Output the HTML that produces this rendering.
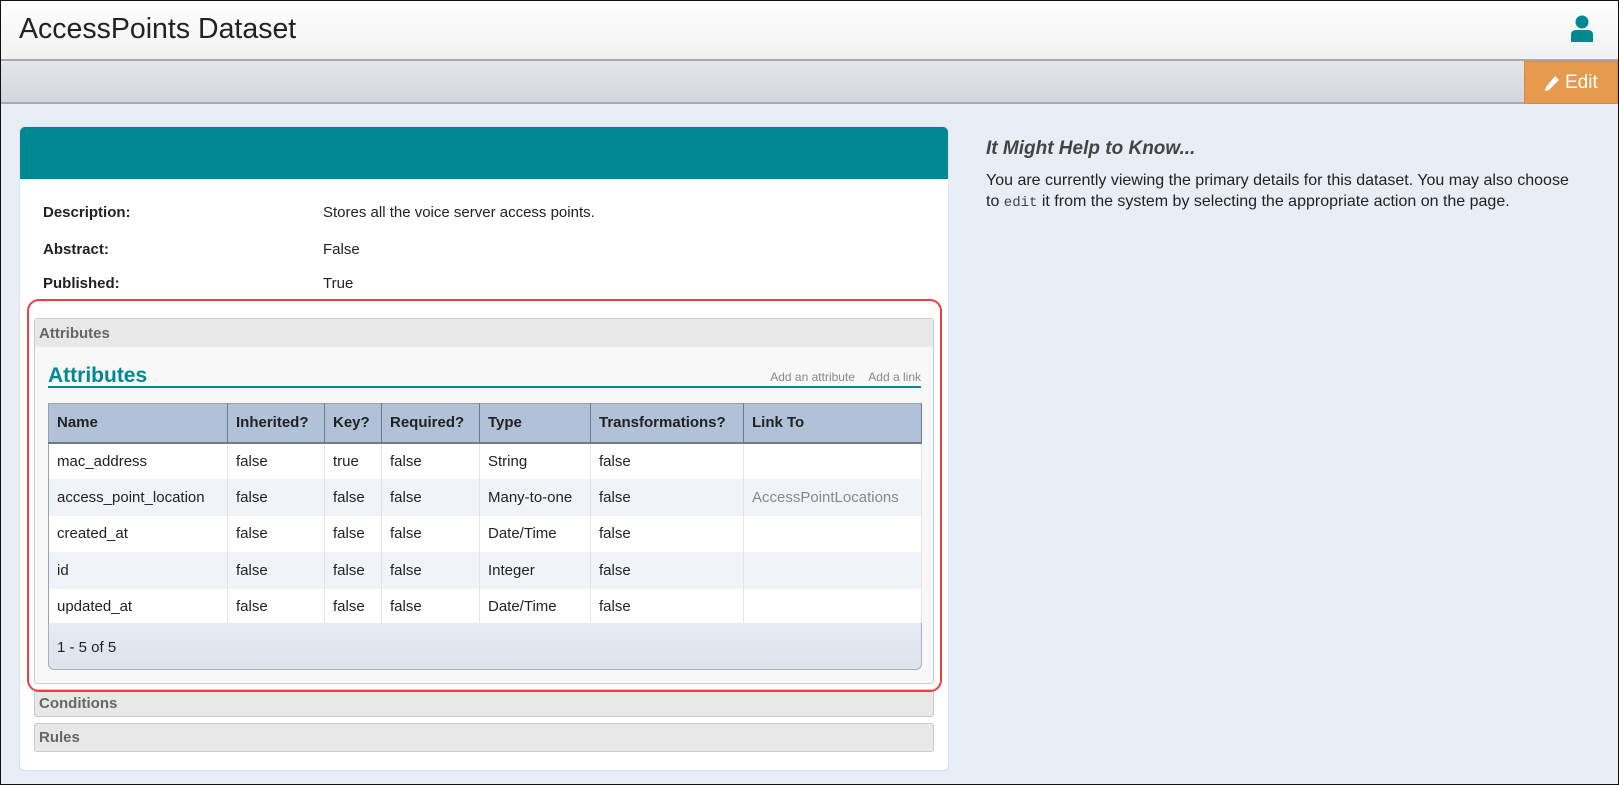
<!DOCTYPE html>
<html><head><meta charset="utf-8"><style>
*{box-sizing:border-box;margin:0;padding:0}
body{width:1619px;height:785px;overflow:hidden;background:#e9edf5;font-family:"Liberation Sans",Arial,sans-serif;color:#222;position:relative}
.frame{position:absolute;left:0;top:0;width:1619px;height:785px;border:1px solid #111;pointer-events:none;z-index:10}
.hdr{position:absolute;left:0;top:0;width:1619px;height:61px;background:linear-gradient(#fff,#f1f1f1);border-bottom:2px solid #a9a9a9}
.hdr h1{position:absolute;left:19px;top:13px;font-weight:normal;font-size:28.5px;color:#222}
.bar{position:absolute;left:0;top:61px;width:1619px;height:43px;background:linear-gradient(#e3e6eb,#d2d6dc);border-bottom:2px solid #a9a9a9}
.edit{position:absolute;right:1px;top:61px;width:94px;height:43px;background:#e59a4e;border:1px solid #d98a3b;color:#fff;font-size:19px;line-height:41px;padding-left:40px}
.card{position:absolute;left:19px;top:126px;width:930px;height:645px;background:#fff;border:1px solid #dde2ea;border-radius:6px;overflow:hidden}
.card .top{height:52px;background:#018993}
.row{position:absolute;left:23px;font-size:15px}
.row b{display:inline-block;width:280px}
.redbox{position:absolute;left:27px;top:299px;width:915px;height:393px;border:2px solid #ef3e42;border-radius:12px;z-index:5}
.panel{position:absolute;left:34px;top:318px;width:900px;height:366px;background:#f8f8f8;border:1px solid #ccc;border-radius:3px}
.ph{height:28px;background:#e8e8e8;font-weight:bold;color:#666;font-size:15px;padding:6px 0 0 4px}
.ttl{position:absolute;left:13px;top:45px;width:873px;height:24px;border-bottom:2px solid #018993;color:#018993;font-weight:bold;font-size:21px}
.ttl span{position:absolute;right:0;top:6px;font-size:12px;color:#888;font-weight:normal}
table{position:absolute;left:13px;top:84px;width:874px;border-collapse:collapse;font-size:15px;border:1px solid #97a3b5}
th{background:#b0c1d8;height:39px;text-align:left;padding-left:8px;border-right:1px solid #6f7b8c;border-bottom:2px solid #6f7b8c;color:#222}
td{height:36.6px;padding-left:8px;border-right:1px solid #e4e4e4}
tr:nth-child(odd) td{background:#f0f3f7}
tr:nth-child(even) td{background:#fff}
.foot{position:absolute;left:13px;top:304px;width:874px;height:47px;background:linear-gradient(#e7ebf2,#dde3ec);border:1px solid #a6b0bf;border-top:none;border-radius:0 0 6px 6px;font-size:15px;padding:16px 0 0 8px}
.acc{position:absolute;left:34px;width:900px;height:28px;background:#e8e8e8;border:1px solid #ccc;border-radius:3px;font-weight:bold;color:#666;font-size:15px;padding:5px 0 0 4px}
.help{position:absolute;left:986px;top:138px;width:620px}
.help h2{font-style:italic;font-size:19px;color:#444;margin-bottom:10px}
.help p{font-size:16px;line-height:21px;color:#222}
.help code{font-family:"Liberation Mono",monospace;font-size:14px;color:#444}
</style></head><body>
<div class="frame"></div>
<div class="hdr"><h1>AccessPoints Dataset</h1>
<svg style="position:absolute;left:1570px;top:15px" width="24" height="28" viewBox="0 0 24 28"><circle cx="12" cy="7" r="6.5" fill="#018993"/><path d="M1 27 V20 Q1 15 6 15 H18 Q23 15 23 20 V27 Z" fill="#018993"/></svg>
</div>
<div class="bar"></div>
<div class="edit"><svg style="position:absolute;left:19px;top:13px" width="16" height="17" viewBox="0 0 16 17"><path d="M11 1 L15 5 L5 15 L1 16 L2 12 Z" fill="#fff"/></svg>Edit</div>
<div class="card"><div class="top"></div>
<div class="row" style="top:77px"><b>Description:</b>Stores all the voice server access points.</div>
<div class="row" style="top:114px"><b>Abstract:</b>False</div>
<div class="row" style="top:148px"><b>Published:</b>True</div>
</div>
<div class="panel"><div class="ph">Attributes</div>
<div class="ttl">Attributes<span>Add an attribute&nbsp;&nbsp;&nbsp;&nbsp;Add a link</span></div>
<table>
<tr><th style="width:179px">Name</th><th style="width:97px">Inherited?</th><th style="width:57px">Key?</th><th style="width:98px">Required?</th><th style="width:111px">Type</th><th style="width:153px">Transformations?</th><th>Link To</th></tr>
<tr><td>mac_address</td><td>false</td><td>true</td><td>false</td><td>String</td><td>false</td><td></td></tr>
<tr><td>access_point_location</td><td>false</td><td>false</td><td>false</td><td>Many-to-one</td><td>false</td><td style="color:#888">AccessPointLocations</td></tr>
<tr><td>created_at</td><td>false</td><td>false</td><td>false</td><td>Date/Time</td><td>false</td><td></td></tr>
<tr><td>id</td><td>false</td><td>false</td><td>false</td><td>Integer</td><td>false</td><td></td></tr>
<tr><td>updated_at</td><td>false</td><td>false</td><td>false</td><td>Date/Time</td><td>false</td><td></td></tr>
</table>
<div class="foot">1 - 5 of 5</div>
</div>
<div class="redbox"></div>
<div class="acc" style="top:689px">Conditions</div>
<div class="acc" style="top:723px;height:29px">Rules</div>
<div class="help"><h2>It Might Help to Know...</h2>
<p>You are currently viewing the primary details for this dataset. You may also choose<br>to <code>edit</code> it from the system by selecting the appropriate action on the page.</p></div>
</body></html>
